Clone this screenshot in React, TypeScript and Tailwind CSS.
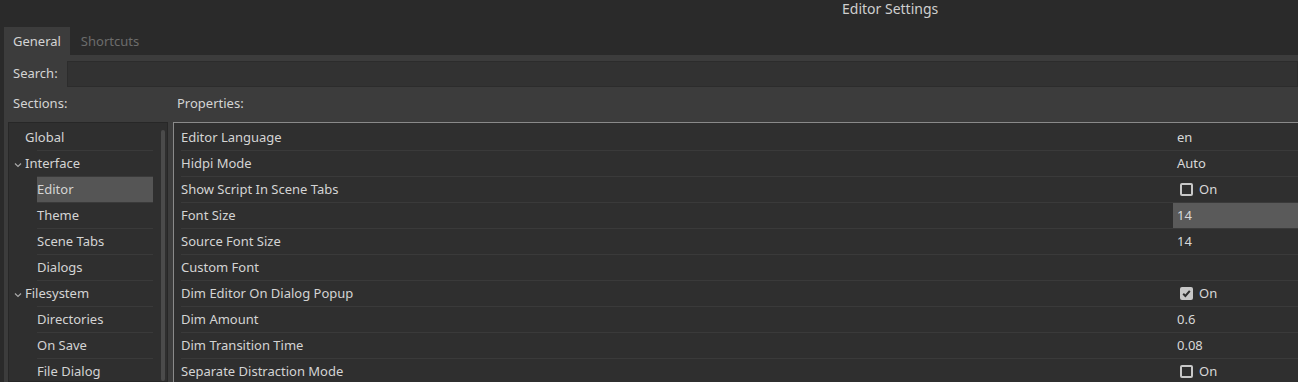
import React from "react";

const Chevron = () => (
  <svg width="8" height="6" viewBox="0 0 8 6" className="shrink-0">
    <path d="M1 1.5 L4 4.5 L7 1.5" fill="none" stroke="#a8a8a8" strokeWidth="1.2" />
  </svg>
);

const CheckBox = ({ checked }: { checked: boolean }) =>
  checked ? (
    <div className="w-[13px] h-[13px] rounded-[2px] bg-[#c8c8c8] flex items-center justify-center">
      <svg width="11" height="11" viewBox="0 0 11 11">
        <path d="M2.2 5.8 L4.4 8 L8.8 2.8" fill="none" stroke="#2f2f2f" strokeWidth="2" />
      </svg>
    </div>
  ) : (
    <div className="w-[13px] h-[13px] rounded-[2px] border-2 border-[#c8c8c8]" />
  );

type Sec = { label: string; level: 0 | 1; chevron?: boolean; selected?: boolean };
const sections: Sec[] = [
  { label: "Global", level: 0 },
  { label: "Interface", level: 0, chevron: true },
  { label: "Editor", level: 1, selected: true },
  { label: "Theme", level: 1 },
  { label: "Scene Tabs", level: 1 },
  { label: "Dialogs", level: 1 },
  { label: "Filesystem", level: 0, chevron: true },
  { label: "Directories", level: 1 },
  { label: "On Save", level: 1 },
  { label: "File Dialog", level: 1 },
];

type Prop = { name: string; value?: string; check?: boolean; checked?: boolean; selected?: boolean };
const props: Prop[] = [
  { name: "Editor Language", value: "en" },
  { name: "Hidpi Mode", value: "Auto" },
  { name: "Show Script In Scene Tabs", check: true, checked: false },
  { name: "Font Size", value: "14", selected: true },
  { name: "Source Font Size", value: "14" },
  { name: "Custom Font", value: "" },
  { name: "Dim Editor On Dialog Popup", check: true, checked: true },
  { name: "Dim Amount", value: "0.6" },
  { name: "Dim Transition Time", value: "0.08" },
  { name: "Separate Distraction Mode", check: true, checked: false },
];

export default function App() {
  return (
    <div
      className="w-[1298px] h-[382px] overflow-hidden bg-[#2a2a2a] text-[#d2d2d2] text-[14px] leading-none flex flex-col"
      style={{ fontFamily: "'Noto Sans', 'Open Sans', sans-serif" }}
    >
      {/* title */}
      <div className="h-[27px] shrink-0 flex items-start pl-[842px] pt-[1px]">
        <span className="text-[#cfcfcf] text-[14px] leading-[16px]">Editor Settings</span>
      </div>
      {/* tabs */}
      <div className="h-[28px] shrink-0 flex pl-[4px]">
        <div className="w-[66px] h-full bg-[#3c3c3c] flex items-center justify-center text-[#d4d4d4] text-[13px]">
          General
        </div>
        <div className="w-[80px] h-full flex items-center justify-center text-[#6c6c6c] text-[13px]">
          Shortcuts
        </div>
      </div>
      {/* panel */}
      <div className="flex-1 ml-[4px] bg-[#3c3c3c] flex flex-col min-h-0">
        <div className="h-[32px] shrink-0 flex items-center pt-[5px]">
          <span className="pl-[9px] w-[63px] text-[13px] text-[#d4d4d4]">Search:</span>
          <div className="flex-1 h-[26px] bg-[#323232] border border-[#2c2c2c]" />
        </div>
        <div className="h-[35px] shrink-0 flex items-center pb-[3px]">
          <span className="pl-[9px] w-[173px] text-[13px] text-[#d4d4d4]">Sections:</span>
          <span className="text-[13px] text-[#d4d4d4]">Properties:</span>
        </div>
        <div className="flex-1 flex min-h-0">
          {/* sections tree */}
          <div className="ml-[4px] w-[160px] bg-[#2f2f2f] border border-[#272727] relative pt-[2px]">
            {sections.map((s) => (
              <div key={s.label} className="h-[26px] flex items-stretch">
                {s.level === 0 ? (
                  <>
                    <div className="w-[16px] shrink-0 flex items-center pl-[5px]">
                      {s.chevron ? (
                        <div className="mt-[1px]">
                          <Chevron />
                        </div>
                      ) : null}
                    </div>
                    <div className="flex-1 flex flex-col">
                      <div className="flex-1 flex items-center">
                        <span className="text-[13px] text-[#d4d4d4]">{s.label}</span>
                      </div>
                      <div className="h-px ml-[12px] w-[116px] bg-[#3a3a3a]" />
                    </div>
                  </>
                ) : (
                  <>
                    <div className="w-[28px] shrink-0" />
                    <div className="flex flex-col w-[116px]">
                      <div
                        className={
                          "flex-1 flex items-center " + (s.selected ? "bg-[#555555]" : "")
                        }
                      >
                        <span className="text-[13px] text-[#d4d4d4]">{s.label}</span>
                      </div>
                      <div className="h-px bg-[#3a3a3a]" />
                    </div>
                  </>
                )}
              </div>
            ))}
            <div className="absolute left-[152px] top-[7px] bottom-0 w-[4px] rounded-full bg-[#4b4b4b]" />
          </div>
          {/* properties */}
          <div className="ml-[5px] flex-1 bg-[#2f2f2f] border-t border-l border-[#8a8a8a] pt-[2px]">
            {props.map((p) => (
              <div key={p.name} className="h-[26px] flex flex-col">
                <div className="flex-1 flex items-stretch">
                  <div className="w-[999px] pl-[7px] flex items-center text-[13px] text-[#d4d4d4]">
                    {p.name}
                  </div>
                  <div
                    className={
                      "flex-1 flex items-center pl-[4px] text-[13px] text-[#d8d8d8] " +
                      (p.selected ? "bg-[#5a5a5a]" : "")
                    }
                  >
                    {p.check ? (
                      <div className="flex items-center gap-[6px] pl-[3px]">
                        <CheckBox checked={!!p.checked} />
                        <span>On</span>
                      </div>
                    ) : (
                      p.value
                    )}
                  </div>
                </div>
                <div className="h-px ml-[7px] bg-[#3a3a3a]" />
              </div>
            ))}
          </div>
        </div>
      </div>
    </div>
  );
}
